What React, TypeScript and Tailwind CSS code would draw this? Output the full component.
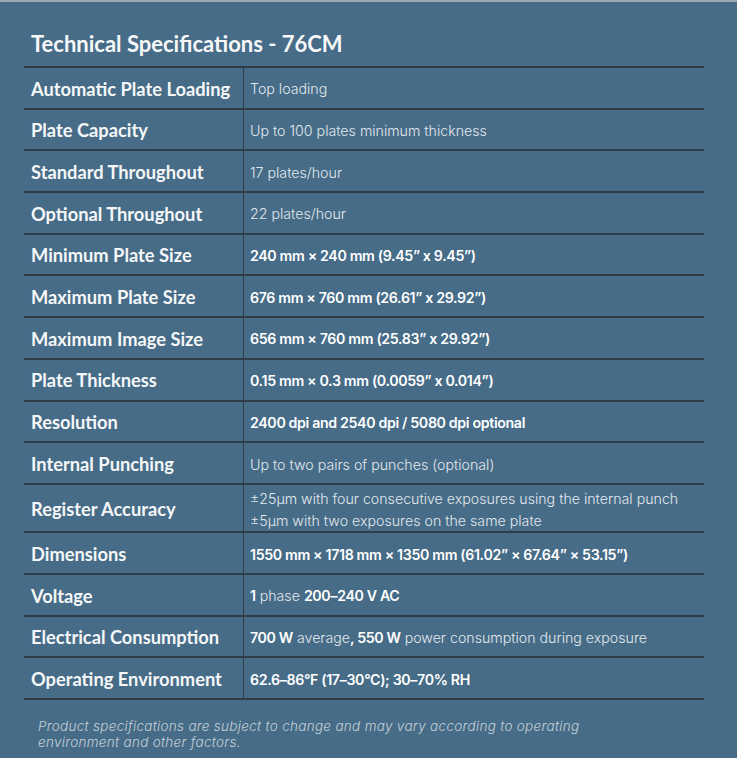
import React from "react";

type Spec = {
  label: string;
  value: React.ReactNode;
  tall?: boolean;
};

const B = ({ children }: { children: React.ReactNode }) => (
  <span className="font-semibold text-white tracking-[-0.35px]">{children}</span>
);

const specs: Spec[] = [
  { label: "Automatic Plate Loading", value: "Top loading" },
  { label: "Plate Capacity", value: "Up to 100 plates minimum thickness" },
  { label: "Standard Throughout", value: "17 plates/hour" },
  { label: "Optional Throughout", value: "22 plates/hour" },
  { label: "Minimum Plate Size", value: <B>240 mm × 240 mm (9.45” x 9.45”)</B> },
  { label: "Maximum Plate Size", value: <B>676 mm × 760 mm (26.61” x 29.92”)</B> },
  { label: "Maximum Image Size", value: <B>656 mm × 760 mm (25.83” x 29.92”)</B> },
  { label: "Plate Thickness", value: <B>0.15 mm × 0.3 mm (0.0059” x 0.014”)</B> },
  { label: "Resolution", value: <B>2400 dpi and 2540 dpi / 5080 dpi optional</B> },
  { label: "Internal Punching", value: "Up to two pairs of punches (optional)" },
  {
    label: "Register Accuracy",
    tall: true,
    value: (
      <>
        ±25µm with four consecutive exposures using the internal punch
        <br />
        ±5µm with two exposures on the same plate
      </>
    ),
  },
  { label: "Dimensions", value: <B>1550 mm × 1718 mm × 1350 mm (61.02” × 67.64” × 53.15”)</B> },
  {
    label: "Voltage",
    value: (
      <>
        <B>1</B> phase <B>200–240 V AC</B>
      </>
    ),
  },
  {
    label: "Electrical Consumption",
    value: (
      <>
        <B>700 W</B> average<B>, 550 W</B> power consumption during exposure
      </>
    ),
  },
  { label: "Operating Environment", value: <B>62.6–86°F (17–30°C); 30–70% RH</B> },
];

export default function App() {
  return (
    <div className="w-[737px] h-[758px] bg-[#466c87] border-t-2 border-[#9aa9b4] overflow-hidden">
      <div className="px-6 pt-[27px]">
        <h1 className="pl-[7px] text-[22px] leading-[29px] font-bold text-[#f7f8f9] font-['Lato',sans-serif] mb-[8px]">
          Technical Specifications - 76CM
        </h1>

        <div className="w-[680px] border-t-2 border-[#2f3d48]">
          {specs.map((s) => (
            <div
              key={s.label}
              className={`flex border-b-2 border-[#2f3d48] ${s.tall ? "h-[48.5px]" : "h-[41.7px]"}`}
            >
              <div className="w-[220px] shrink-0 pl-[7px] pt-[3px] flex items-center border-r-[1.5px] border-[#2f3d48] font-['Lato',sans-serif] font-bold text-[18.3px] text-[#f5f7f8]">
                {s.label}
              </div>
              <div className="pl-[6px] pt-[3px] flex items-center font-['Inter',sans-serif] font-light text-[14.2px] leading-[22px] text-[#e2e8ed]">
                <div>{s.value}</div>
              </div>
            </div>
          ))}
        </div>

        <p className="mt-[18px] pl-[14px] w-[600px] font-['Inter',sans-serif] italic font-light text-[13.5px] leading-[16px] tracking-[0.3px] text-[#c5d0d9]">
          Product specifications are subject to change and may vary according to operating environment and other factors.
        </p>
      </div>
    </div>
  );
}
